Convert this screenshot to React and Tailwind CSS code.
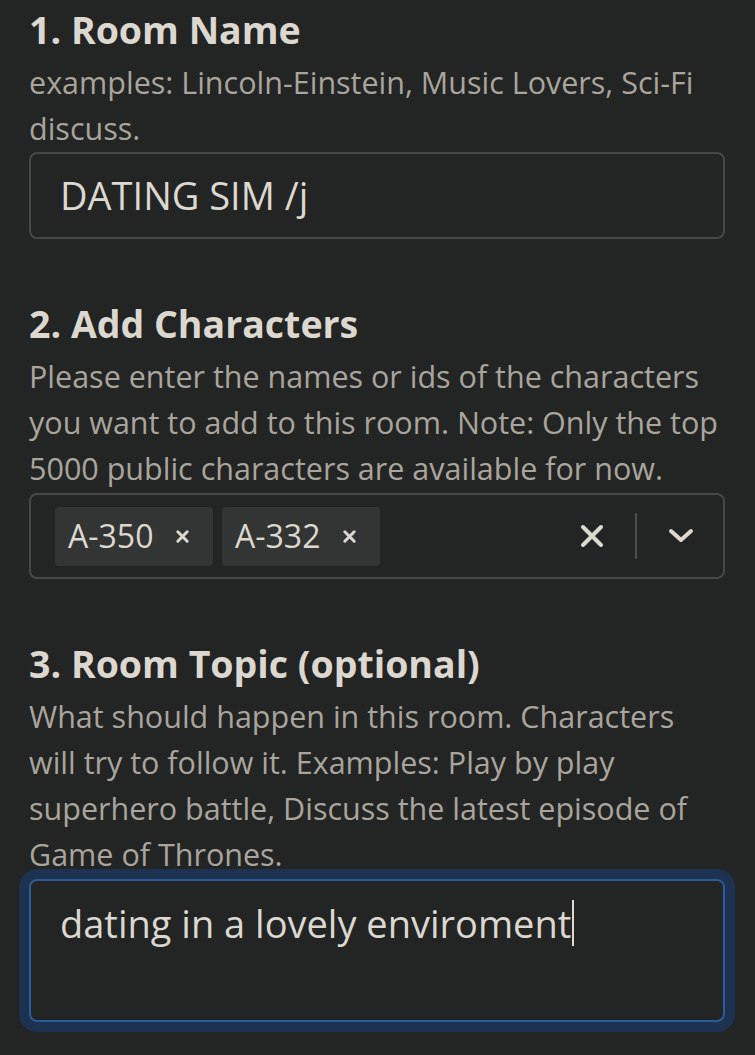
import React from 'react';

const font = { fontFamily: '"Open Sans", "Noto Sans", sans-serif' };

const Heading = ({ children, className = '' }) => (
  <h2 className={`text-[37.5px] font-bold leading-[46px] text-[#dcd8d0] ${className}`}>{children}</h2>
);

const Desc = ({ children }) => (
  <p className="mt-[6px] text-[30.5px] leading-[46px] text-[#a9a59c]">{children}</p>
);

const Chip = ({ label }) => (
  <div className="flex h-[59px] w-[158px] items-center gap-[22px] rounded-[4px] bg-[#333535] pl-[13px]">
    <span className="text-[32px] text-[#dcd8d0]">{label}</span>
    <svg width="15" height="15" viewBox="0 0 16 16" className="text-[#dcd8d0]">
      <path d="M3 3 L13 13 M13 3 L3 13" stroke="currentColor" strokeWidth="3.2" strokeLinecap="round" />
    </svg>
  </div>
);

export default function App() {
  return (
    <div className="min-h-screen w-full bg-[#232424] px-[29px] pt-[7px] pb-[20px]" style={font}>
      <Heading>1. Room Name</Heading>
      <Desc>examples: Lincoln-Einstein, Music Lovers, Sci-Fi discuss.</Desc>
      <div className="mt-[1px] flex h-[87px] w-[696px] items-center rounded-[8px] border-2 border-[#464747] pl-[29px] text-[38px] text-[#dcd8d0]">
        DATING SIM /j
      </div>

      <Heading className="mt-[62px]">2. Add Characters</Heading>
      <Desc>
        Please enter the names or ids of the characters you want to add to this room. Note: Only the top 5000 public characters are available for now.
      </Desc>
      <div className="mt-[2px] flex h-[86px] w-[696px] items-center rounded-[8px] border-2 border-[#464747] pl-[24px] pr-[28px]">
        <div className="flex flex-1 items-center gap-[9px]">
          <Chip label="A-350" />
          <Chip label="A-332" />
        </div>
        <svg width="26" height="26" viewBox="0 0 26 26" className="text-[#dcd8d0]">
          <path d="M4 4 L22 22 M22 4 L4 22" stroke="currentColor" strokeWidth="4" strokeLinecap="round" />
        </svg>
        <div className="mx-[30px] h-[46px] w-[2px] bg-[#4a4b4b]" />
        <svg width="28" height="18" viewBox="0 0 28 18" className="text-[#dcd8d0]">
          <path d="M4 4 L14 13 L24 4" stroke="currentColor" strokeWidth="4" fill="none" strokeLinecap="round" strokeLinejoin="round" />
        </svg>
      </div>

      <Heading className="mt-[62px]">3. Room Topic (optional)</Heading>
      <Desc>
        What should happen in this room. Characters will try to follow it. Examples: Play by play superhero battle, Discuss the latest episode of Game of Thrones.
      </Desc>
      <div className="mt-[2px] h-[143px] w-[696px] rounded-[8px] border-2 border-[#2c5b99] pl-[29px] pt-[11px] text-[38px] text-[#dcd8d0] shadow-[0_0_0_10px_#1d3150]">
        dating in a lovely enviroment<span className="ml-[1px] inline-block h-[46px] w-[2px] translate-y-[8px] bg-[#dcd8d0]" />
      </div>
    </div>
  );
}
